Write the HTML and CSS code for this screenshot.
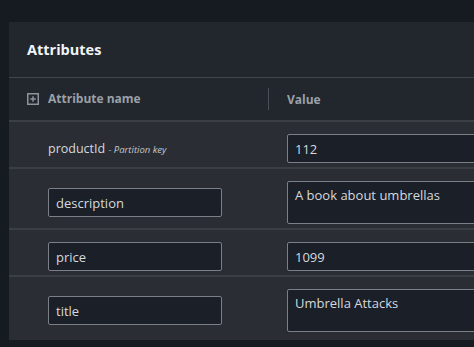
FILE: index.html
```html
<!DOCTYPE html>
<html lang="en">

<head>
    <meta charset="UTF-8">
    <meta name="viewport" content="width=device-width, initial-scale=1.0">
    <title>Attributes</title>
    <link rel="stylesheet" href="styles.css">
</head>

<body>
    <div class="panel">
        <div class="panel-header">
            <h2>Attributes</h2>
        </div>

        <div class="row head-row">
            <div class="cell icon-cell">
                <svg class="add-icon" width="12" height="12" viewBox="0 0 12 12">
                    <rect x="0.75" y="0.75" width="10.5" height="10.5" fill="none" stroke="#8d939b" stroke-width="1.5" />
                    <path d="M6 3.2v5.6M3.2 6h5.6" stroke="#8d939b" stroke-width="1.5" />
                </svg>
            </div>
            <div class="cell col-title name-title">Attribute name</div>
            <div class="cell col-title">Value</div>
        </div>

        <div class="row">
            <div class="cell"></div>
            <div class="cell key-name">productId <span class="key-type">- Partition key</span></div>
            <div class="cell"><div class="field">112</div></div>
        </div>

        <div class="row">
            <div class="cell"></div>
            <div class="cell"><div class="field name-field">description</div></div>
            <div class="cell"><div class="field area">A book about umbrellas</div></div>
        </div>

        <div class="row">
            <div class="cell"></div>
            <div class="cell"><div class="field name-field">price</div></div>
            <div class="cell"><div class="field">1099</div></div>
        </div>

        <div class="row last">
            <div class="cell"></div>
            <div class="cell"><div class="field name-field">title</div></div>
            <div class="cell"><div class="field area">Umbrella Attacks</div></div>
        </div>
    </div>
</body>

</html>
```

FILE: styles.css
```css
body {
    font-family: "Open Sans", "Noto Sans", sans-serif;
    margin: 0;
    padding: 22px 0 0 9px;
    background-color: #161a21;
    color: #d5d9de;
    overflow: hidden;
}

.panel {
    width: 600px;
    background-color: #2a2d33;
}

.panel-header {
    height: 56px;
    box-sizing: border-box;
    display: flex;
    align-items: center;
    padding-left: 18px;
    background-color: #22262d;
    border-bottom: 1px solid #41464d;
}

.panel-header h2 {
    margin: 0;
    font-size: 14.5px;
    font-weight: 700;
    color: #f2f4f6;
}

.row {
    display: grid;
    grid-template-columns: 39px 239px 1fr;
    align-items: center;
    padding: 12px 0 4px;
    border-bottom: 2px solid #3a3e45;
}

.row.last {
    border-bottom: none;
    padding-bottom: 8px;
}

.head-row {
    height: 44px;
    box-sizing: border-box;
    padding: 0;
    background-color: #22262d;
}

.icon-cell {
    padding-left: 18px;
    display: flex;
    align-items: center;
}

.col-title {
    font-size: 12px;
    font-weight: 700;
    color: #9aa1a9;
}

.name-title {
    position: relative;
    height: 22px;
    line-height: 22px;
}

/* divider between the two column titles */
.name-title::after {
    content: "";
    position: absolute;
    right: 18px;
    top: 0;
    width: 1px;
    height: 22px;
    background-color: #4b5058;
}

.key-name {
    font-size: 12.5px;
    color: #d5d9de;
}

.key-type {
    font-size: 9.5px;
    font-style: italic;
    color: #c2c7cd;
}

.field {
    height: 29px;
    box-sizing: border-box;
    padding: 0 7px;
    display: flex;
    align-items: center;
    font-size: 13px;
    color: #d5d9de;
    background-color: #1a1f28;
    border: 1px solid #7b8088;
    border-radius: 2px;
}

.name-field {
    width: 174px;
}

.area {
    height: 43px;
    align-items: flex-start;
    padding-top: 4px;
}
```
